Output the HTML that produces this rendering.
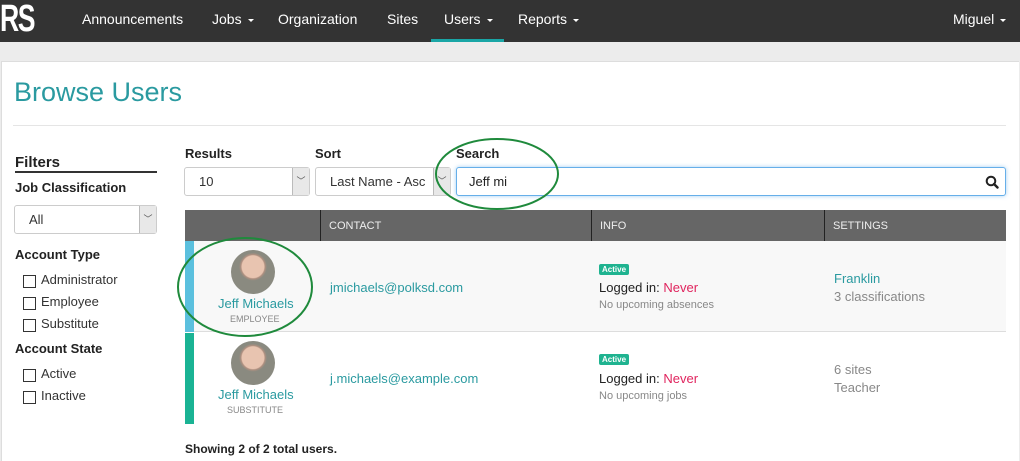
<!DOCTYPE html>
<html><head><meta charset="utf-8"><style>
*{box-sizing:border-box;margin:0;padding:0}
body{width:1020px;height:459px;overflow:hidden;background:#ececec;font-family:"Liberation Sans",sans-serif;position:relative;color:#333}
.a{position:absolute;white-space:nowrap}
.nav{left:0;top:0;width:1020px;height:42px;background:#333}
.ni{color:#fff;font-size:14px;top:11px}
.car{display:inline-block;width:0;height:0;border-left:3px solid transparent;border-right:3px solid transparent;border-top:3px solid #fff;vertical-align:middle;margin-left:6px}
.panel{left:1px;top:61px;width:1018px;height:400px;background:#fff;border-top:1px solid #ddd;border-left:1px solid #ddd}
.b{font-weight:bold;font-size:13px;color:#222}
.sel{height:29px;border:1px solid #ccc;border-radius:3px;background:#fff;font-size:13px;color:#333;padding:6px 0 0 14px}
.dd{position:absolute;right:0;top:0;width:17px;height:27px;background:#e8e8e8;border-left:1px solid #bbb;font-size:9px;color:#555;text-align:center;line-height:27px}
.cb{width:13px;height:13px;border:1px solid #333;background:#fff}
.cl{font-size:13px;color:#333}
.th{top:210px;height:31px;background:#666;color:#eee;font-size:11px;padding:10px 0 0 8px}
.av{width:44px;height:44px;border-radius:50%;background:radial-gradient(circle at 50% 38%,#e8c4b0 0 11px,#b09080 12px,#8a8a80 14px),#555;overflow:hidden}
.nm{color:#2a9aa0;font-size:13px}
.sm{color:#888;font-size:9px}
.badge{background:#1fb390;color:#fff;font-size:8px;font-weight:bold;padding:1px 3px;border-radius:2px}
</style></head><body>
<div class="a nav"></div>
<div class="a" style="left:0;top:-2px;color:#fff;font-size:38px;font-weight:bold;letter-spacing:-2px;transform:scaleX(.7);transform-origin:left">RS</div>
<div class="a ni" style="left:82px">Announcements</div>
<div class="a ni" style="left:212px">Jobs<span class="car"></span></div>
<div class="a ni" style="left:278px">Organization</div>
<div class="a ni" style="left:387px">Sites</div>
<div class="a ni" style="left:444px">Users<span class="car"></span></div>
<div class="a" style="left:431px;top:39px;width:73px;height:3px;background:#1aa6a6"></div>
<div class="a ni" style="left:518px">Reports<span class="car"></span></div>
<div class="a ni" style="left:953px">Miguel<span class="car"></span></div>
<div class="a panel"></div>
<div class="a" style="left:14px;top:77px;font-size:27px;color:#2a9aa0">Browse Users</div>
<div class="a" style="left:13px;top:125px;width:993px;height:1px;background:#e5e5e5"></div>

<div class="a" style="left:15px;top:154px;font-size:15px;font-weight:bold;color:#222">Filters</div>
<div class="a" style="left:15px;top:171px;width:142px;height:2px;background:#333"></div>
<div class="a b" style="left:15px;top:180px">Job Classification</div>
<div class="a sel" style="left:14px;top:205px;width:143px">All<div class="dd">﹀</div></div>
<div class="a b" style="left:15px;top:247px">Account Type</div>
<div class="a cb" style="left:23px;top:275px"></div><div class="a cl" style="left:41px;top:272px">Administrator</div>
<div class="a cb" style="left:23px;top:297px"></div><div class="a cl" style="left:41px;top:294px">Employee</div>
<div class="a cb" style="left:23px;top:319px"></div><div class="a cl" style="left:41px;top:316px">Substitute</div>
<div class="a b" style="left:15px;top:341px">Account State</div>
<div class="a cb" style="left:23px;top:369px"></div><div class="a cl" style="left:41px;top:366px">Active</div>
<div class="a cb" style="left:23px;top:391px"></div><div class="a cl" style="left:41px;top:388px">Inactive</div>

<div class="a b" style="left:185px;top:146px">Results</div>
<div class="a sel" style="left:184px;top:167px;width:126px">10<div class="dd">﹀</div></div>
<div class="a b" style="left:315px;top:146px">Sort</div>
<div class="a sel" style="left:315px;top:167px;width:136px">Last Name - Asc<div class="dd">﹀</div></div>
<div class="a b" style="left:456px;top:146px">Search</div>
<div class="a sel" style="left:456px;top:167px;width:550px;border-color:#66afe9;box-shadow:0 0 4px rgba(102,175,233,.6);padding-left:12px;color:#222">Jeff mi
<svg style="position:absolute;right:6px;top:7px" width="14" height="14" viewBox="0 0 14 14"><circle cx="6" cy="6" r="4.3" fill="none" stroke="#222" stroke-width="2"/><path d="M9 9l3.5 3.5" stroke="#222" stroke-width="2.4" stroke-linecap="round"/></svg></div>

<div class="a th" style="left:185px;width:136px;border-right:1px solid #222"></div>
<div class="a th" style="left:321px;width:271px;border-right:1px solid #222">CONTACT</div>
<div class="a th" style="left:592px;width:233px;border-right:1px solid #222">INFO</div>
<div class="a th" style="left:825px;width:181px">SETTINGS</div>

<div class="a" style="left:185px;top:241px;width:821px;height:91px;background:#f8f8f8;border-bottom:1px solid #ddd"></div>
<div class="a" style="left:185px;top:241px;width:9px;height:91px;background:#5bc0de"></div>
<div class="a av" style="left:231px;top:250px"></div>
<div class="a nm" style="left:218px;top:296px">Jeff Michaels</div>
<div class="a sm" style="left:230px;top:314px">EMPLOYEE</div>
<div class="a nm" style="left:330px;top:280px">jmichaels@polksd.com</div>
<div class="a badge" style="left:599px;top:264px">Active</div>
<div class="a" style="left:599px;top:280px;font-size:13px;color:#222">Logged in: <span style="color:#e0245e">Never</span></div>
<div class="a" style="left:599px;top:299px;font-size:11px;color:#888">No upcoming absences</div>
<div class="a nm" style="left:834px;top:271px">Franklin</div>
<div class="a" style="left:834px;top:289px;font-size:13px;color:#888">3 classifications</div>

<div class="a" style="left:185px;top:333px;width:9px;height:91px;background:#1ab394"></div>
<div class="a av" style="left:231px;top:341px"></div>
<div class="a nm" style="left:218px;top:387px">Jeff Michaels</div>
<div class="a sm" style="left:227px;top:405px">SUBSTITUTE</div>
<div class="a nm" style="left:330px;top:371px">j.michaels@example.com</div>
<div class="a badge" style="left:599px;top:354px">Active</div>
<div class="a" style="left:599px;top:371px;font-size:13px;color:#222">Logged in: <span style="color:#e0245e">Never</span></div>
<div class="a" style="left:599px;top:390px;font-size:11px;color:#888">No upcoming jobs</div>
<div class="a" style="left:834px;top:362px;font-size:13px;color:#888">6 sites</div>
<div class="a" style="left:834px;top:380px;font-size:13px;color:#888">Teacher</div>

<div class="a b" style="left:185px;top:442px;font-size:12px">Showing 2 of 2 total users.</div>

<svg class="a" style="left:0;top:0" width="1020" height="459">
<ellipse cx="497" cy="174" rx="61" ry="35" fill="none" stroke="#1f8a3c" stroke-width="2"/>
<ellipse cx="245" cy="287" rx="67" ry="49" fill="none" stroke="#1f8a3c" stroke-width="2"/>
</svg>
</body></html>
